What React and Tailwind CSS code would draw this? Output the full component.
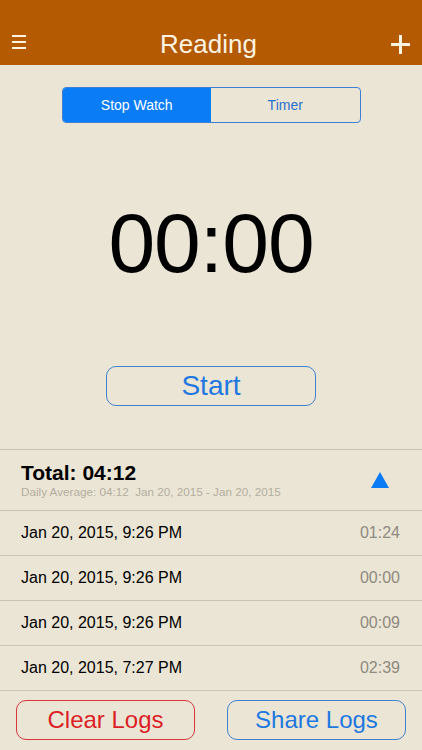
import React from "react";

const logs = [
  { when: "Jan 20, 2015, 9:26 PM", time: "01:24" },
  { when: "Jan 20, 2015, 9:26 PM", time: "00:00" },
  { when: "Jan 20, 2015, 9:26 PM", time: "00:09" },
  { when: "Jan 20, 2015, 7:27 PM", time: "02:39" },
];

const App = () => {
  return (
    <div
      className="w-[422px] h-[750px] overflow-hidden bg-[#ebe5d5] flex flex-col"
      style={{ fontFamily: '"Liberation Sans", Arial, sans-serif' }}
    >
      {/* Header */}
      <div className="h-[65px] bg-[#b35a02] flex items-end justify-between px-3 pb-[5px] shrink-0">
        <div className="w-[14px] flex flex-col gap-[4px] mb-[11px]">
          <span className="h-[2px] bg-[#fdf3e3]" />
          <span className="h-[2px] bg-[#fdf3e3]" />
          <span className="h-[2px] bg-[#fdf3e3]" />
        </div>
        <div className="text-[26px] leading-[32px] text-[#fdf3e3]">Reading</div>
        <svg width="19" height="19" viewBox="0 0 19 19" className="mb-[6px]">
          <path d="M9.5 0v19M0 9.5h19" stroke="#fdf3e3" strokeWidth="3" />
        </svg>
      </div>

      {/* Segmented control */}
      <div className="flex justify-center mt-[22px]">
        <div className="w-[299px] h-[36px] flex border border-[#3d7fd3] rounded-[4px] overflow-hidden text-[14px]">
          <div className="flex-1 bg-[#0a7cf6] text-white flex items-center justify-center">Stop Watch</div>
          <div className="flex-1 text-[#2a71cc] flex items-center justify-center">Timer</div>
        </div>
      </div>

      {/* Clock */}
      <div className="text-center text-[84px] leading-none text-black mt-[78px] tracking-[-1px]">00:00</div>

      {/* Start */}
      <div className="flex justify-center mt-[81px]">
        <button className="w-[210px] h-[40px] border border-[#3f80d0] rounded-[10px] text-[#1f78e0] text-[28px] leading-none">
          Start
        </button>
      </div>

      {/* Total */}
      <div className="mt-[43px] border-t border-[#c9c3b4] h-[61px] flex items-center justify-between pl-[21px] pr-[32px]">
        <div className="flex flex-col">
          <div className="text-[21px] font-bold leading-[24px] text-black">Total: 04:12</div>
          <div className="text-[11.7px] leading-[14px] text-[#b3ada0]">Daily Average: 04:12&nbsp;&nbsp;Jan 20, 2015 - Jan 20, 2015</div>
        </div>
        <svg width="20" height="18" viewBox="0 0 20 18">
          <path d="M10 1L19 17H1Z" fill="#0a7cf6" />
        </svg>
      </div>

      {/* Logs */}
      {logs.map((l, i) => (
        <div
          key={i}
          className="h-[45px] border-t border-[#c9c3b4] flex items-center justify-between pl-[21px] pr-[22px] text-[16px]"
        >
          <span className="text-black">{l.when}</span>
          <span className="text-[#8f8a80]">{l.time}</span>
        </div>
      ))}

      {/* Bottom buttons */}
      <div className="border-t border-[#c9c3b4] flex justify-between px-[16px] pt-[9px]">
        <button className="w-[179px] h-[40px] border border-[#d9353a] rounded-[10px] text-[#dc1f26] text-[24px] leading-none">
          Clear Logs
        </button>
        <button className="w-[179px] h-[40px] border border-[#3f80d0] rounded-[10px] text-[#1f78e0] text-[24px] leading-none">
          Share Logs
        </button>
      </div>
    </div>
  );
};

export default App;
